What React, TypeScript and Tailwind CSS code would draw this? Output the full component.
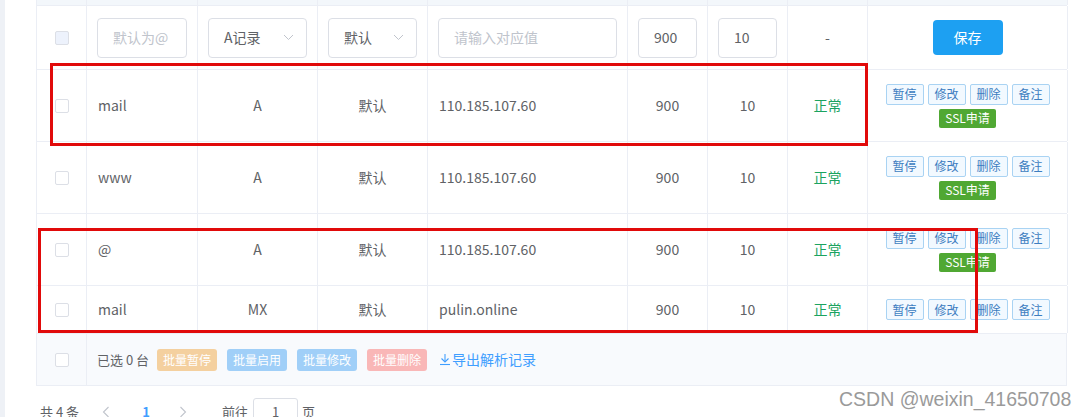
import React from "react";

const COLS =
  "grid grid-cols-[50px_111px_120px_110px_200px_80px_80px_80px_200px]";
const CELL = "border-r border-[#ebeef5] flex items-center min-w-0";

function Checkbox({ disabled }: { disabled?: boolean }) {
  return (
    <span
      className={
        "block w-[14px] h-[14px] rounded-[2px] border border-[#dcdfe6] " +
        (disabled ? "bg-[#edf2fc]" : "bg-white")
      }
    />
  );
}

function ChevronDown() {
  return (
    <svg width="11" height="7" viewBox="0 0 11 7" fill="none">
      <polyline points="1,1 5.5,5.5 10,1" stroke="#c0c4cc" strokeWidth="1" />
    </svg>
  );
}

function Chevron({ dir }: { dir: "left" | "right" }) {
  return (
    <svg width="8" height="12" viewBox="0 0 8 12" fill="none">
      {dir === "left" ? (
        <polyline points="6.5,1 1.5,6 6.5,11" stroke="#c0c4cc" strokeWidth="1.1" />
      ) : (
        <polyline points="1.5,1 6.5,6 1.5,11" stroke="#c0c4cc" strokeWidth="1.1" />
      )}
    </svg>
  );
}

function DownloadIcon() {
  return (
    <svg width="12" height="13" viewBox="0 0 12 13" fill="none">
      <line x1="6" y1="1" x2="6" y2="9" stroke="#409eff" strokeWidth="1.1" />
      <polyline points="2.5,5.5 6,9 9.5,5.5" stroke="#409eff" strokeWidth="1.1" fill="none" />
      <line x1="1" y1="11.5" x2="11" y2="11.5" stroke="#409eff" strokeWidth="1.1" />
    </svg>
  );
}

function ActBtn({ label }: { label: string }) {
  return (
    <span className="inline-flex items-center justify-center w-[38px] h-[21px] border border-[#a9d3f3] bg-[#f2f9ff] text-[#3d7dbf] text-[12px] rounded-[2px] leading-none">
      {label}
    </span>
  );
}

function Actions({ ssl }: { ssl: boolean }) {
  return (
    <div className="flex flex-col items-center w-full">
      <div className="flex gap-[4px]">
        <ActBtn label="暂停" />
        <ActBtn label="修改" />
        <ActBtn label="删除" />
        <ActBtn label="备注" />
      </div>
      {ssl && (
        <span className="mt-[4px] inline-flex items-center justify-center w-[57px] h-[19px] bg-[#50a833] text-white text-[12px] rounded-[2px] leading-none">
          SSL申请
        </span>
      )}
    </div>
  );
}

type Row = {
  host: string;
  type: string;
  line: string;
  value: string;
  ttl: string;
  mx: string;
  ssl: boolean;
  h: string;
};

const rows: Row[] = [
  { host: "mail", type: "A", line: "默认", value: "110.185.107.60", ttl: "900", mx: "10", ssl: true, h: "h-[72px]" },
  { host: "www", type: "A", line: "默认", value: "110.185.107.60", ttl: "900", mx: "10", ssl: true, h: "h-[72px]" },
  { host: "@", type: "A", line: "默认", value: "110.185.107.60", ttl: "900", mx: "10", ssl: true, h: "h-[72px]" },
  { host: "mail", type: "MX", line: "默认", value: "pulin.online", ttl: "900", mx: "10", ssl: false, h: "h-[48px]" },
];

export default function App() {
  return (
    <div
      className="relative w-[1086px] h-[417px] overflow-hidden bg-white flex text-[#606266] text-[14px]"
      style={{ fontFamily: '"Noto Sans CJK SC", "Noto Sans", sans-serif' }}
    >
      <div className="w-[5px] shrink-0 bg-[#eef1f6]" />
      <div className="ml-[31px] w-[1031px] shrink-0 flex flex-col">
        <div className="border-l border-[#ebeef5]">
          {/* header band */}
          <div className={COLS + " h-[6px] bg-[#f3f7fb] border-b border-[#ebeef5]"}>
            {Array.from({ length: 9 }).map((_, i) => (
              <div key={i} className="border-r border-[#ebeef5]" />
            ))}
          </div>
          {/* input row */}
          <div className={COLS + " h-[64px] border-b border-[#ebeef5]"}>
            <div className={CELL + " justify-center"}>
              <Checkbox disabled />
            </div>
            <div className={CELL + " px-[10px]"}>
              <div className="w-full h-[40px] border border-[#dcdfe6] rounded-[4px] flex items-center pl-[15px] text-[#c0c4cc]">
                默认为@
              </div>
            </div>
            <div className={CELL + " px-[10px]"}>
              <div className="w-full h-[40px] border border-[#dcdfe6] rounded-[4px] flex items-center justify-between pl-[15px] pr-[12px]">
                <span>A记录</span>
                <ChevronDown />
              </div>
            </div>
            <div className={CELL + " px-[10px]"}>
              <div className="w-full h-[40px] border border-[#dcdfe6] rounded-[4px] flex items-center justify-between pl-[15px] pr-[12px]">
                <span>默认</span>
                <ChevronDown />
              </div>
            </div>
            <div className={CELL + " px-[10px]"}>
              <div className="w-full h-[40px] border border-[#dcdfe6] rounded-[4px] flex items-center pl-[15px] text-[#c0c4cc]">
                请输入对应值
              </div>
            </div>
            <div className={CELL + " px-[10px]"}>
              <div className="w-full h-[40px] border border-[#dcdfe6] rounded-[4px] flex items-center pl-[15px]">
                900
              </div>
            </div>
            <div className={CELL + " px-[10px]"}>
              <div className="w-full h-[40px] border border-[#dcdfe6] rounded-[4px] flex items-center pl-[15px]">
                10
              </div>
            </div>
            <div className={CELL + " justify-center"}>-</div>
            <div className={CELL + " justify-center"}>
              <span className="inline-flex items-center justify-center w-[70px] h-[35px] rounded-[4px] bg-[#1da0f2] text-white text-[14px]">
                保存
              </span>
            </div>
          </div>
          {/* data rows */}
          {rows.map((r, i) => (
            <div key={i} className={COLS + " " + r.h + " border-b border-[#ebeef5]"}>
              <div className={CELL + " justify-center"}>
                <Checkbox />
              </div>
              <div className={CELL + " pl-[11px]"}>{r.host}</div>
              <div className={CELL + " justify-center"}>{r.type}</div>
              <div className={CELL + " justify-center"}>{r.line}</div>
              <div className={CELL + " pl-[11px]"}>{r.value}</div>
              <div className={CELL + " justify-center"}>{r.ttl}</div>
              <div className={CELL + " justify-center"}>{r.mx}</div>
              <div className={CELL + " justify-center text-[#1ba35f]"}>正常</div>
              <div className={CELL + " justify-center"}>
                <Actions ssl={r.ssl} />
              </div>
            </div>
          ))}
          {/* footer */}
          <div className="flex h-[52px] bg-[#f8fafd] border-b border-r border-[#ebeef5]">
            <div className="w-[50px] border-r border-[#ebeef5] flex items-center justify-center">
              <Checkbox />
            </div>
            <div className="flex items-center pl-[10px]">
              <span className="text-[13px] w-[50px] whitespace-nowrap">已选 0 台</span>
              <span className="ml-[10px] inline-flex items-center justify-center w-[60px] h-[22px] rounded-[3px] bg-[#f4d09f] text-white text-[12px]">
                批量暂停
              </span>
              <span className="ml-[10px] inline-flex items-center justify-center w-[60px] h-[22px] rounded-[3px] bg-[#a0cff8] text-white text-[12px]">
                批量启用
              </span>
              <span className="ml-[10px] inline-flex items-center justify-center w-[60px] h-[22px] rounded-[3px] bg-[#a0cff8] text-white text-[12px]">
                批量修改
              </span>
              <span className="ml-[10px] inline-flex items-center justify-center w-[60px] h-[22px] rounded-[3px] bg-[#f9b7b7] text-white text-[12px]">
                批量删除
              </span>
              <span className="ml-[12px] inline-flex items-center gap-[1px] text-[#409eff] text-[14px] whitespace-nowrap">
                <DownloadIcon />
                导出解析记录
              </span>
            </div>
          </div>
        </div>
        {/* pagination */}
        <div className="mt-[12px] h-[28px] flex items-center pl-[4px] text-[13px] whitespace-nowrap">
          <span className="w-[51px]">共 4 条</span>
          <span className="w-[30px] flex justify-center">
            <Chevron dir="left" />
          </span>
          <span className="ml-[10px] w-[30px] text-center text-[#409eff] font-bold">1</span>
          <span className="ml-[7px] w-[30px] flex justify-center">
            <Chevron dir="right" />
          </span>
          <span className="ml-[24px]">前往</span>
          <span className="ml-[5px] w-[45px] h-[28px] border border-[#dcdfe6] rounded-[3px] flex items-center justify-center">
            1
          </span>
          <span className="ml-[4px]">页</span>
        </div>
      </div>

      {/* red annotation boxes */}
      <div className="absolute left-[50px] top-[63px] w-[818px] h-[83px] border-[3px] border-[#e10a0a] pointer-events-none" />
      <div className="absolute left-[38px] top-[228px] w-[940px] h-[105px] border-[3px] border-[#e10a0a] pointer-events-none" />

      {/* watermark */}
      <div
        className="absolute left-[839px] top-[385px] text-[19.5px] text-[#9a9a9a] whitespace-nowrap"
        style={{ fontFamily: '"Liberation Sans", Arial, sans-serif', textShadow: "0 0 2px #fff" }}
      >
        CSDN @weixin_41650708
      </div>
    </div>
  );
}
